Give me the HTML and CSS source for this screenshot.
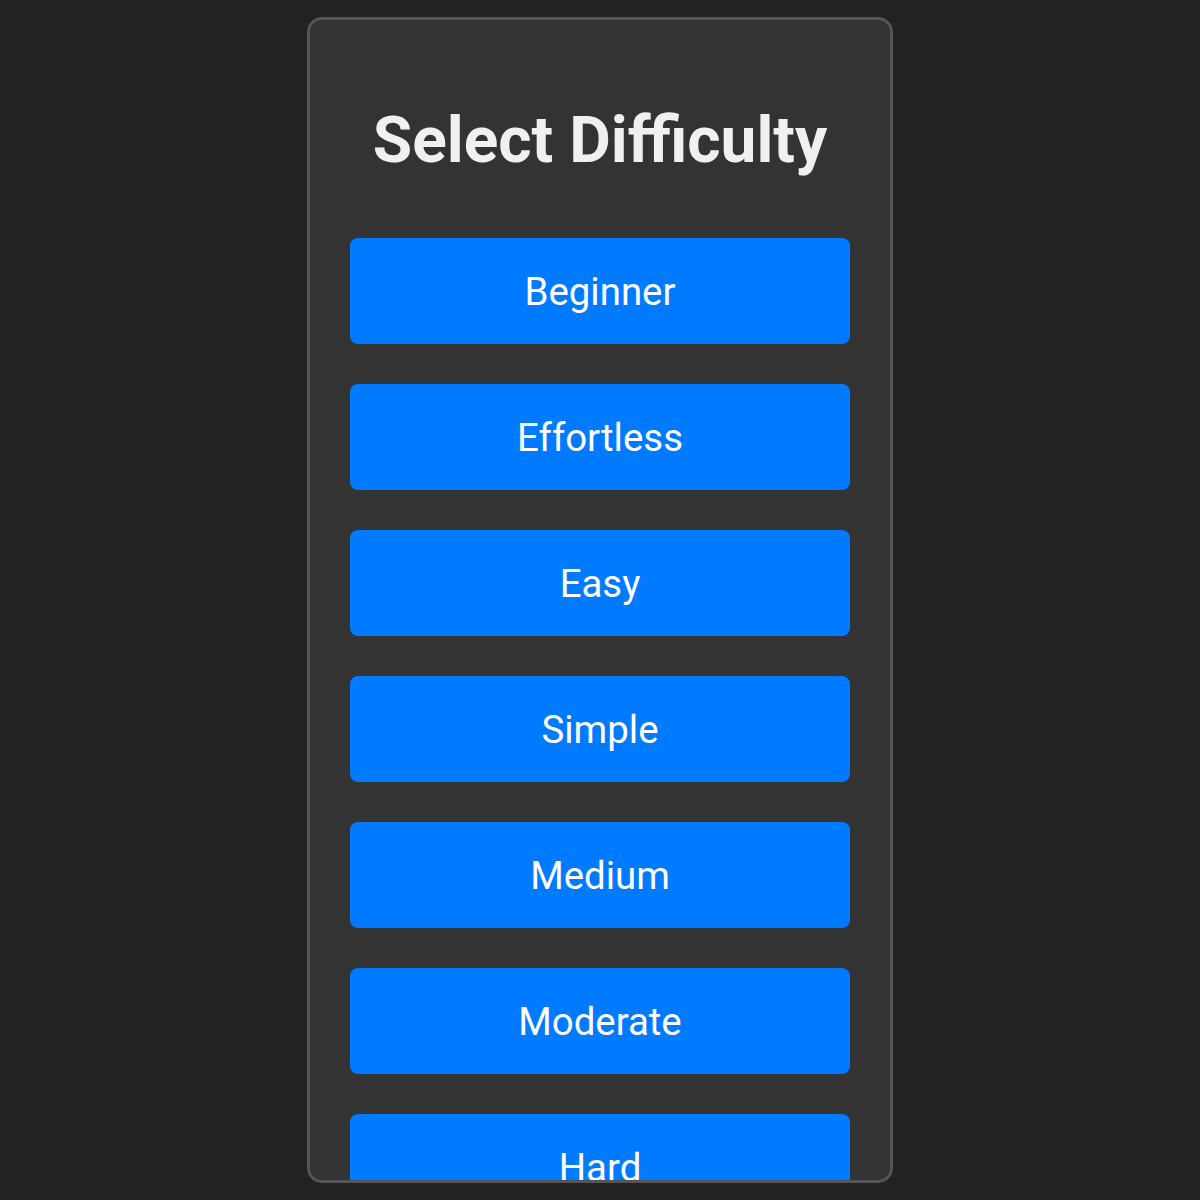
FILE: index.html
```html
<!DOCTYPE html>
<html>
<head>
<meta charset="utf-8">
<link rel="stylesheet" href="styles.css">
</head>
<body>
<div class="page">
  <div class="card">
    <h1 class="title">Select Difficulty</h1>
    <div class="options">
      <button class="option">Beginner</button>
      <button class="option">Effortless</button>
      <button class="option">Easy</button>
      <button class="option">Simple</button>
      <button class="option">Medium</button>
      <button class="option">Moderate</button>
      <button class="option">Hard</button>
    </div>
  </div>
</div>
</body>
</html>
```
FILE: styles.css
```css
html, body {
  margin: 0;
  padding: 0;
  background: #222222;
  font-family: Roboto, "Liberation Sans", sans-serif;
}
.page {
  height: 1200px;
  display: flex;
  justify-content: center;
  align-items: center;
}
.card {
  box-sizing: border-box;
  width: 586px;
  height: 1166px;
  background: #333333;
  border: 3px solid #555555;
  border-radius: 15px;
  padding: 40px 40px 0;
  overflow: hidden;
  display: flex;
  flex-direction: column;
}
.title {
  margin: 43px 0 60px;
  font-size: 64px;
  font-weight: 700;
  color: #f0f0f0;
  text-align: center;
  line-height: 75px;
}
.options {
  display: flex;
  flex-direction: column;
  gap: 40px;
}
.option {
  flex: none;
  height: 106px;
  border: none;
  border-radius: 8px;
  background: #007bff;
  color: #ffffff;
  font-family: Roboto, "Liberation Sans", sans-serif;
  font-size: 38.4px;
  padding: 0;
}
```
